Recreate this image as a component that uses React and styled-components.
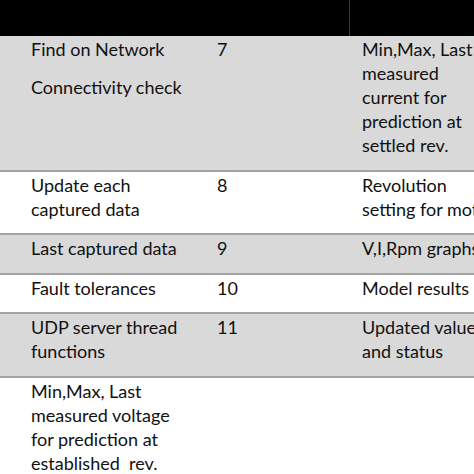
import React from "react";
import styled, { createGlobalStyle } from "styled-components";

const Global = createGlobalStyle`
  html, body { margin: 0; padding: 0; background: #fff; }
  body { width: 474px; height: 474px; overflow: hidden; }
  #root { width: 474px; height: 474px; overflow: hidden; }
`;

const Table = styled.div`
  display: grid;
  grid-template-columns: 204px 145px 260px;
  width: 609px;
  font-family: Lato, "Liberation Sans", sans-serif;
  font-size: 18px;
  line-height: 24px;
  color: #111;
`;

const HeadCell = styled.div`
  height: 36px;
  background: #000;
  border-left: ${(p) => (p.$divider ? "1px solid #3a3a3a" : "none")};
`;

const Cell = styled.div`
  background: ${(p) => (p.$shade ? "#d9d9d9" : "#ffffff")};
  border-top: ${(p) => (p.$noTop ? "none" : "2px solid #a3a3a3")};
  padding: ${(p) => (p.$first ? "1px 0 12.5px 31px" : "1px 0 12.5px 13px")};
  white-space: pre;
`;

const Para = styled.div`
  & + & { margin-top: 14px; }
`;

const rows = [
  {
    shade: true,
    c1: [["Find on Network"], ["Connectivity check"]],
    c2: "7",
    c3: ["Min,Max, Last", "measured", "current for", "prediction at", "settled rev."],
    noTop: true,
  },
  { shade: false, c1: [["Update each", "captured data"]], c2: "8", c3: ["Revolution", "setting for motor"] },
  { shade: true, c1: [["Last captured data"]], c2: "9", c3: ["V,I,Rpm graphs"] },
  { shade: false, c1: [["Fault tolerances"]], c2: "10", c3: ["Model results"] },
  { shade: true, c1: [["UDP server thread", "functions"]], c2: "11", c3: ["Updated values", "and status"] },
  {
    shade: false,
    c1: [["Min,Max, Last", "measured voltage", "for prediction at", "established  rev."]],
    c2: "",
    c3: [],
  },
];

const Lines = ({ lines }) =>
  lines.map((l, i) => (
    <React.Fragment key={i}>
      {i > 0 && <br />}
      {l}
    </React.Fragment>
  ));

export default function App() {
  return (
    <>
      <Global />
      <Table>
        <HeadCell />
        <HeadCell />
        <HeadCell $divider />
        {rows.map((r, i) => (
          <React.Fragment key={i}>
            <Cell $shade={r.shade} $noTop={r.noTop} $first>
              {r.c1.map((p, j) => (
                <Para key={j}>
                  <Lines lines={p} />
                </Para>
              ))}
            </Cell>
            <Cell $shade={r.shade} $noTop={r.noTop}>{r.c2}</Cell>
            <Cell $shade={r.shade} $noTop={r.noTop}>
              <Lines lines={r.c3} />
            </Cell>
          </React.Fragment>
        ))}
      </Table>
    </>
  );
}
